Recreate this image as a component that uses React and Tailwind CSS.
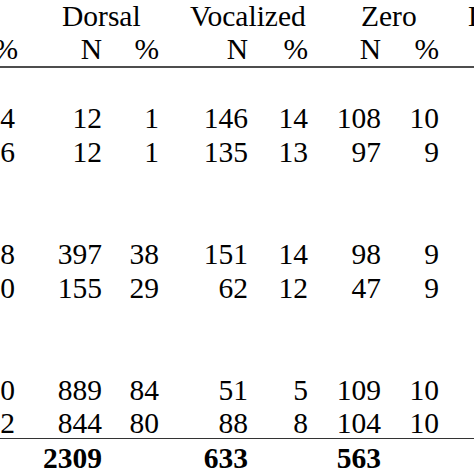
const rows = [
  null,
  ['4', '12', '1', '146', '14', '108', '10'],
  ['6', '12', '1', '135', '13', '97', '9'],
  null,
  null,
  ['8', '397', '38', '151', '14', '98', '9'],
  ['0', '155', '29', '62', '12', '47', '9'],
  null,
  null,
  ['0', '889', '84', '51', '5', '109', '10'],
  ['2', '844', '80', '88', '8', '104', '10'],
];

const cols = 'grid grid-cols-[15px_87px_57px_89px_60px_73px_58px_1fr]';

function Row({ cells, bold }) {
  return (
    <div className={`${cols} h-[33.9px] leading-[34px] ${bold ? 'font-bold' : ''}`}>
      {cells.map((c, i) => (
        <div key={i} className="flex justify-end whitespace-nowrap">
          <span>{c}</span>
        </div>
      ))}
      <div />
    </div>
  );
}

export default function App() {
  return (
    <div
      className="w-[474px] h-[474px] overflow-hidden bg-white text-[29.5px] text-black"
      style={{ fontFamily: '"Liberation Serif", "Times New Roman", serif' }}
    >
      <div className="-mt-px flex h-[33px] leading-[34px] whitespace-nowrap">
        <div className="w-[62px] shrink-0" />
        <div className="w-[128px] shrink-0">Dorsal</div>
        <div className="w-[171px] shrink-0">Vocalized</div>
        <div className="w-[107px] shrink-0">Zero</div>
        <div className="shrink-0">Lateral</div>
      </div>
      <div className={`${cols} h-[34px] leading-[34px]`}>
        <div className="flex justify-end whitespace-nowrap">
          <span className="-mr-[3px]">%</span>
        </div>
        {['N', '%', 'N', '%', 'N', '%'].map((c, i) => (
          <div key={i} className="flex justify-end whitespace-nowrap">
            <span>{c}</span>
          </div>
        ))}
        <div />
      </div>
      <div className="h-[1.5px] bg-[#4d4d4d]" />
      {rows.map((r, i) =>
        r ? <Row key={i} cells={r} /> : <div key={i} className="h-[33.9px]" />
      )}
      <div className="-mt-[2px] h-px bg-[#333]" />
      <div className="mt-[1.5px]">
        <Row cells={['', '2309', '', '633', '', '563', '']} bold />
      </div>
    </div>
  );
}
